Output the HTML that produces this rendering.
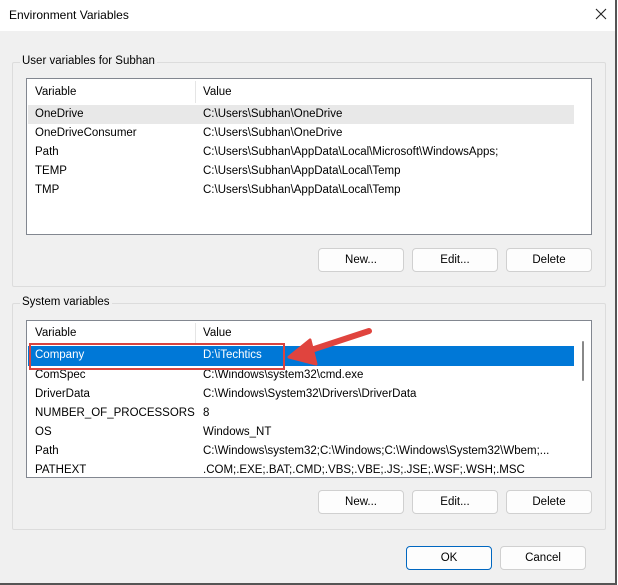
<!DOCTYPE html><html><head><style>
body{margin:0;width:618px;height:585px;overflow:hidden;background:#fff;font-family:"Liberation Sans",sans-serif;font-size:11.5px;color:#000}
.win{position:absolute;left:0;top:0;width:615px;height:583px;background:#f0f0f0;border-right:2px solid #555;border-bottom:2px solid #555}
.title{position:absolute;left:0;top:0;width:615px;height:31px;background:#fff}
.abs{position:absolute}
.grp{position:absolute;border:1px solid #dcdcdc;border-radius:2px}
.lbl{position:absolute;background:#f0f0f0;padding:0 2px}
.lv{position:absolute;background:#fff;border:1px solid #828790;overflow:hidden}
.row{position:absolute;left:1px;height:19px;line-height:19px;width:546px}
.row span{position:absolute}
.btn{position:absolute;width:84px;height:22px;border:1px solid #d0d0d0;border-radius:4px;background:#fdfdfd;text-align:center;line-height:22px}
</style></head><body>
<div class="win">
<div class="title"></div>
<div class="abs" style="left:9px;top:8px;font-size:12px">Environment Variables</div>
<svg class="abs" style="left:595px;top:8px" width="12" height="12"><path d="M1 1L11 11M11 1L1 11" stroke="#222" stroke-width="1.1"/></svg>

<div class="grp" style="left:12px;top:62px;width:592px;height:223px"></div>
<div class="lbl" style="left:20px;top:55px">User variables for Subhan</div>
<div class="lv" style="left:26px;top:78px;width:564px;height:155px">
<div class="row" style="top:0;height:25px;line-height:27px"><span style="left:7px">Variable</span><span style="left:175px">Value</span></div>
<div class="abs" style="left:168px;top:2px;width:1px;height:22px;background:#e5e5e5"></div>
<div class="row" style="top:26px;background:#e8e8e8"><span style="left:7px">OneDrive</span><span style="left:175px">C:\Users\Subhan\OneDrive</span></div>
<div class="row" style="top:45px"><span style="left:7px">OneDriveConsumer</span><span style="left:175px">C:\Users\Subhan\OneDrive</span></div>
<div class="row" style="top:64px"><span style="left:7px">Path</span><span style="left:175px">C:\Users\Subhan\AppData\Local\Microsoft\WindowsApps;</span></div>
<div class="row" style="top:83px"><span style="left:7px">TEMP</span><span style="left:175px">C:\Users\Subhan\AppData\Local\Temp</span></div>
<div class="row" style="top:102px"><span style="left:7px">TMP</span><span style="left:175px">C:\Users\Subhan\AppData\Local\Temp</span></div>
</div>
<div class="btn" style="left:318px;top:248px">New...</div>
<div class="btn" style="left:412px;top:248px">Edit...</div>
<div class="btn" style="left:506px;top:248px">Delete</div>

<div class="grp" style="left:12px;top:303px;width:592px;height:225px"></div>
<div class="lbl" style="left:20px;top:296px">System variables</div>
<div class="lv" style="left:26px;top:320px;width:564px;height:156px">
<div class="row" style="top:0;height:25px;line-height:25px"><span style="left:7px">Variable</span><span style="left:175px">Value</span></div>
<div class="abs" style="left:168px;top:2px;width:1px;height:22px;background:#e5e5e5"></div>
<div class="row" style="top:25px;height:20px;background:#0078d7;color:#fff"><span style="left:7px">Company</span><span style="left:175px">D:\iTechtics</span></div>
<div class="row" style="top:45px"><span style="left:7px">ComSpec</span><span style="left:175px">C:\Windows\system32\cmd.exe</span></div>
<div class="row" style="top:64px"><span style="left:7px">DriverData</span><span style="left:175px">C:\Windows\System32\Drivers\DriverData</span></div>
<div class="row" style="top:83px"><span style="left:7px">NUMBER_OF_PROCESSORS</span><span style="left:175px">8</span></div>
<div class="row" style="top:102px"><span style="left:7px">OS</span><span style="left:175px">Windows_NT</span></div>
<div class="row" style="top:121px"><span style="left:7px">Path</span><span style="left:175px">C:\Windows\system32;C:\Windows;C:\Windows\System32\Wbem;...</span></div>
<div class="row" style="top:140px"><span style="left:7px">PATHEXT</span><span style="left:175px">.COM;.EXE;.BAT;.CMD;.VBS;.VBE;.JS;.JSE;.WSF;.WSH;.MSC</span></div>
<div class="abs" style="left:555px;top:20px;width:2px;height:40px;background:#888;border-radius:1px"></div>
</div>
<div class="abs" style="left:29px;top:343px;width:252px;height:23px;border:2px solid #d9443f"></div>
<svg class="abs" style="left:280px;top:320px" width="100" height="50"><path d="M89 11L22 33" stroke="#e0443e" stroke-width="6" stroke-linecap="round"/><path d="M9 37L30 20L36 44Z" fill="#e0443e" stroke="#e0443e" stroke-width="3" stroke-linejoin="round"/></svg>
<div class="btn" style="left:318px;top:490px">New...</div>
<div class="btn" style="left:412px;top:490px">Edit...</div>
<div class="btn" style="left:506px;top:490px">Delete</div>

<div class="btn" style="left:406px;top:546px;border-color:#0067c0">OK</div>
<div class="btn" style="left:500px;top:546px">Cancel</div>
</div>
</body></html>
